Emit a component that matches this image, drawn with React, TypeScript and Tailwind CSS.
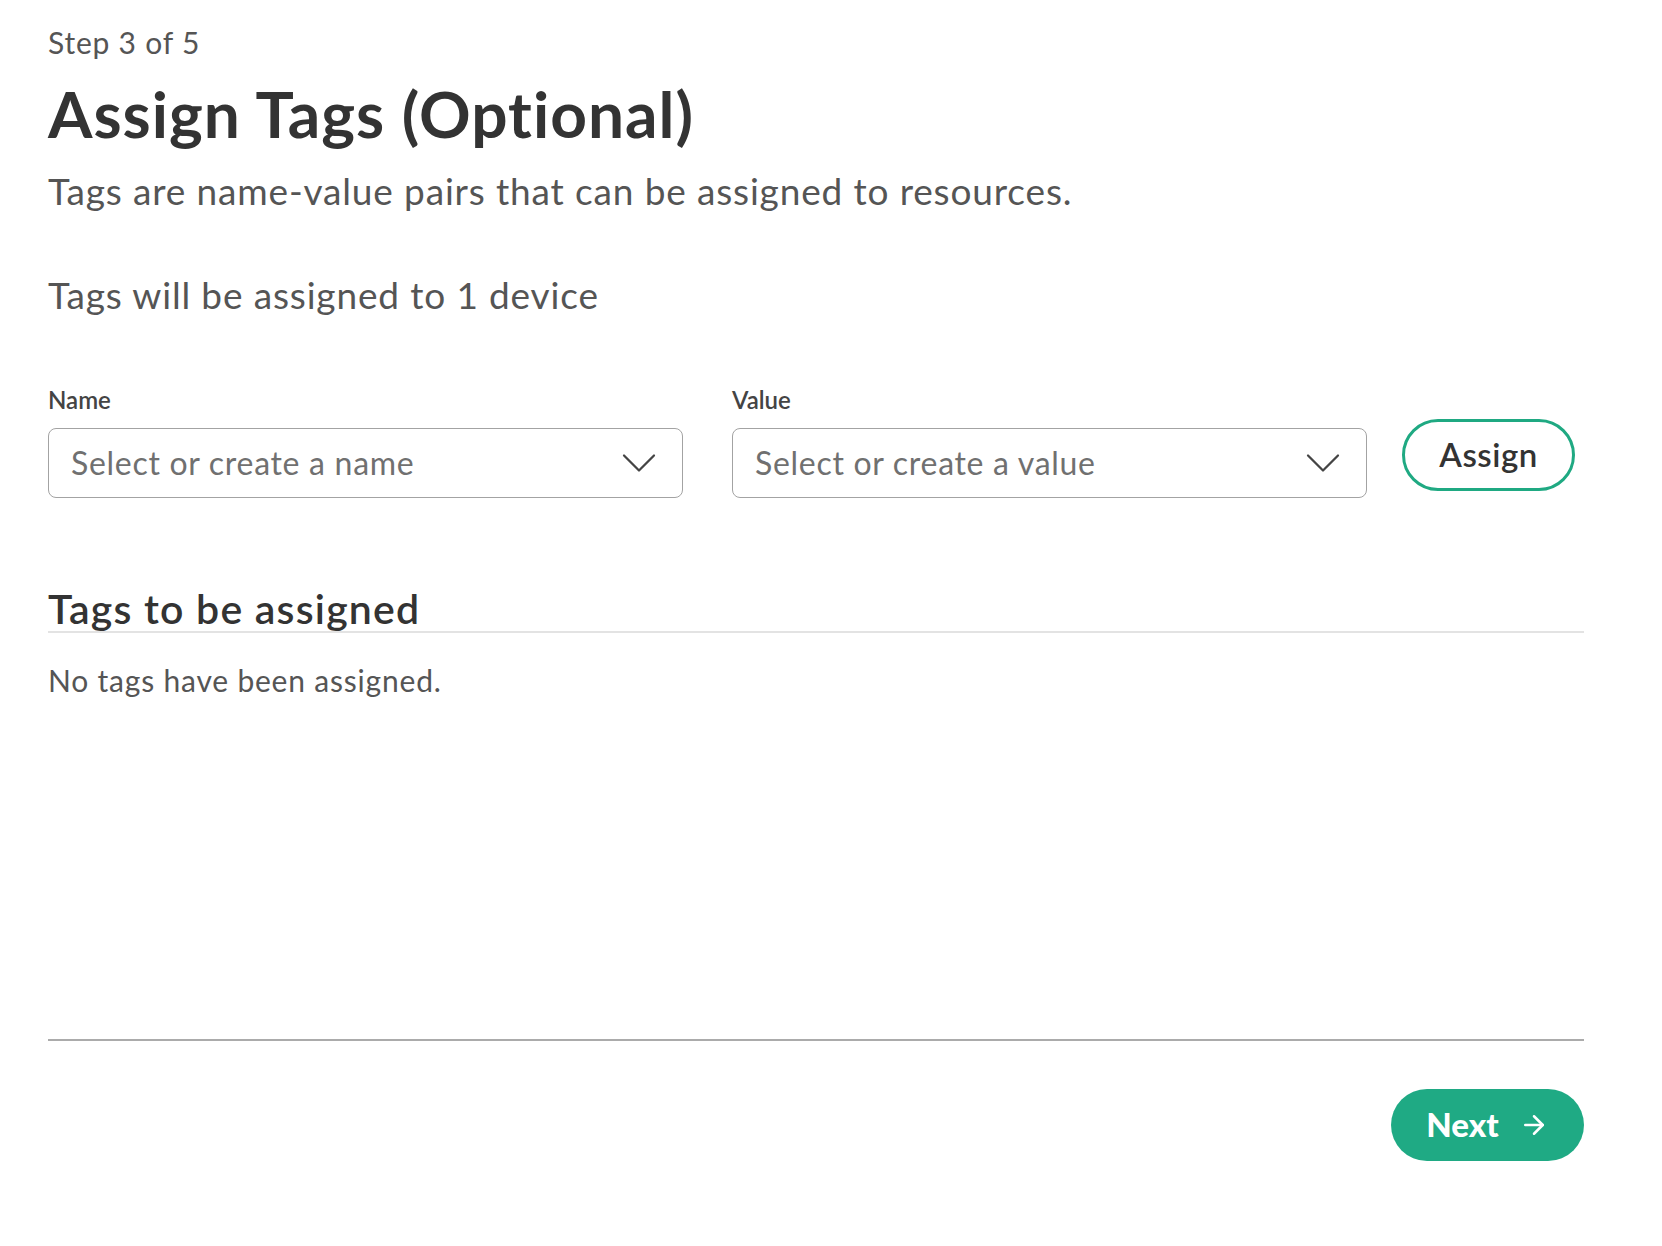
import { ChevronDown, ArrowRight } from 'lucide-react'

const font = { fontFamily: 'Lato, "Open Sans", sans-serif' }

function SelectBox({ label, placeholder, className }: { label: string; placeholder: string; className?: string }) {
  return (
    <div className={`flex flex-col ${className ?? ''}`}>
      <label className="text-[24px] leading-[30px] font-semibold text-[#444]">{label}</label>
      <div className="mt-[13px] h-[70px] w-[635px] flex items-center justify-between rounded-[8px] border-[1.5px] border-[#a3a3a3] pl-[22px] pr-[13px]">
        <span className="text-[32px] tracking-[0.7px] text-[#707070]">{placeholder}</span>
        <ChevronDown size={60} strokeWidth={0.9} className="text-[#444]" />
      </div>
    </div>
  )
}

export default function App() {
  return (
    <main className="min-h-screen bg-white pl-[48px] pr-[78px] pt-[24px]" style={font}>
      <p className="text-[30px] leading-[36px] tracking-[0.8px] text-[#555]">Step 3 of 5</p>
      <h1 className="mt-[18px] text-[64px] leading-[72px] tracking-[1px] font-bold text-[#333]">Assign Tags (Optional)</h1>
      <p className="mt-[19px] text-[37px] leading-[44px] tracking-[0.85px] text-[#555]">
        Tags are name-value pairs that can be assigned to resources.
      </p>
      <p className="mt-[60px] text-[37px] leading-[44px] tracking-[0.85px] text-[#555]">Tags will be assigned to 1 device</p>

      {/* Form */}
      <div className="mt-[68px] flex items-end">
        <SelectBox label="Name" placeholder="Select or create a name" />
        <SelectBox label="Value" placeholder="Select or create a value" className="ml-[49px]" />
        <button className="ml-[35px] mb-[7px] h-[72px] w-[173px] rounded-full border-[3px] border-[#1fa982] text-[33px] tracking-[0.5px] font-semibold text-[#333]">
          Assign
        </button>
      </div>

      {/* Tags list */}
      <h2 className="mt-[89px] text-[41px] leading-[44px] tracking-[1.2px] font-semibold text-[#333] border-b-2 border-[#e3e3e3]">
        Tags to be assigned
      </h2>
      <p className="mt-[29px] text-[30px] leading-[36px] tracking-[0.8px] text-[#555]">No tags have been assigned.</p>

      {/* Footer */}
      <div className="mt-[341px] border-t-2 border-[#ababab]" />
      <div className="mt-[48px] flex justify-end">
        <button className="h-[72px] w-[193px] rounded-full bg-[#1faa84] flex items-center justify-center gap-[20px] text-white text-[33px] font-black">
          Next
          <ArrowRight size={30} strokeWidth={2} />
        </button>
      </div>
    </main>
  )
}
